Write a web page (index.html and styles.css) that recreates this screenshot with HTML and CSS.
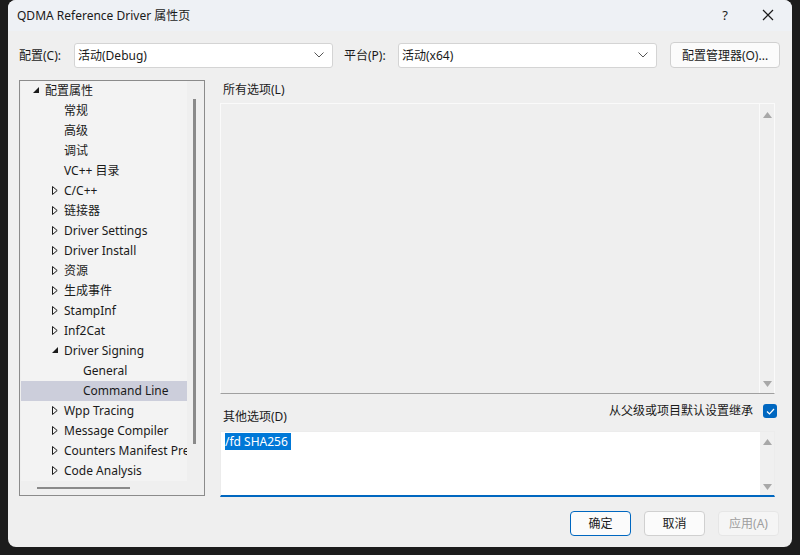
FILE: index.html
```html
<!DOCTYPE html>
<html lang="zh-CN">
<head>
    <meta charset="UTF-8">
    <title>QDMA Reference Driver 属性页</title>
    <link rel="stylesheet" href="styles.css">
</head>
<body>
    <div class="dialog">
        <div class="titlebar">
            <span class="title">QDMA Reference Driver 属性页</span>
            <span class="help">?</span>
            <svg class="close" width="12" height="12" viewBox="0 0 12 12"><path d="M1 1L11 11M11 1L1 11" stroke="#1a1a1a" stroke-width="1.2" fill="none"/></svg>
        </div>

        <div class="config-row">
            <span class="field-label">配置(C):</span>
            <div class="combo">
                <span>活动(Debug)</span>
                <svg width="10" height="6" viewBox="0 0 10 6"><path d="M0.5 0.5L5 5L9.5 0.5" stroke="#555" fill="none"/></svg>
            </div>
            <span class="field-label platform">平台(P):</span>
            <div class="combo">
                <span>活动(x64)</span>
                <svg width="10" height="6" viewBox="0 0 10 6"><path d="M0.5 0.5L5 5L9.5 0.5" stroke="#555" fill="none"/></svg>
            </div>
            <button class="btn manager">配置管理器(O)...</button>
        </div>

        <div class="main">
            <div class="tree">
                <div class="tree-list">
                    <div class="row lv0"><svg class="arrow" width="6" height="6" viewBox="0 0 6 6"><polygon points="6,0 6,6 0,6" fill="#1a1a1a"/></svg><span>配置属性</span></div>
                    <div class="row lv1"><span class="no-arrow"></span><span>常规</span></div>
                    <div class="row lv1"><span class="no-arrow"></span><span>高级</span></div>
                    <div class="row lv1"><span class="no-arrow"></span><span>调试</span></div>
                    <div class="row lv1"><span class="no-arrow"></span><span>VC++ 目录</span></div>
                    <div class="row lv1"><svg class="arrow" width="6" height="9" viewBox="0 0 6 9"><polygon points="0.5,0.5 5.2,4.5 0.5,8.5" fill="none" stroke="#1a1a1a"/></svg><span>C/C++</span></div>
                    <div class="row lv1"><svg class="arrow" width="6" height="9" viewBox="0 0 6 9"><polygon points="0.5,0.5 5.2,4.5 0.5,8.5" fill="none" stroke="#1a1a1a"/></svg><span>链接器</span></div>
                    <div class="row lv1"><svg class="arrow" width="6" height="9" viewBox="0 0 6 9"><polygon points="0.5,0.5 5.2,4.5 0.5,8.5" fill="none" stroke="#1a1a1a"/></svg><span>Driver Settings</span></div>
                    <div class="row lv1"><svg class="arrow" width="6" height="9" viewBox="0 0 6 9"><polygon points="0.5,0.5 5.2,4.5 0.5,8.5" fill="none" stroke="#1a1a1a"/></svg><span>Driver Install</span></div>
                    <div class="row lv1"><svg class="arrow" width="6" height="9" viewBox="0 0 6 9"><polygon points="0.5,0.5 5.2,4.5 0.5,8.5" fill="none" stroke="#1a1a1a"/></svg><span>资源</span></div>
                    <div class="row lv1"><svg class="arrow" width="6" height="9" viewBox="0 0 6 9"><polygon points="0.5,0.5 5.2,4.5 0.5,8.5" fill="none" stroke="#1a1a1a"/></svg><span>生成事件</span></div>
                    <div class="row lv1"><svg class="arrow" width="6" height="9" viewBox="0 0 6 9"><polygon points="0.5,0.5 5.2,4.5 0.5,8.5" fill="none" stroke="#1a1a1a"/></svg><span>StampInf</span></div>
                    <div class="row lv1"><svg class="arrow" width="6" height="9" viewBox="0 0 6 9"><polygon points="0.5,0.5 5.2,4.5 0.5,8.5" fill="none" stroke="#1a1a1a"/></svg><span>Inf2Cat</span></div>
                    <div class="row lv1"><svg class="arrow" width="6" height="6" viewBox="0 0 6 6"><polygon points="6,0 6,6 0,6" fill="#1a1a1a"/></svg><span>Driver Signing</span></div>
                    <div class="row lv2"><span class="no-arrow"></span><span>General</span></div>
                    <div class="row lv2 selected"><span class="no-arrow"></span><span>Command Line</span></div>
                    <div class="row lv1"><svg class="arrow" width="6" height="9" viewBox="0 0 6 9"><polygon points="0.5,0.5 5.2,4.5 0.5,8.5" fill="none" stroke="#1a1a1a"/></svg><span>Wpp Tracing</span></div>
                    <div class="row lv1"><svg class="arrow" width="6" height="9" viewBox="0 0 6 9"><polygon points="0.5,0.5 5.2,4.5 0.5,8.5" fill="none" stroke="#1a1a1a"/></svg><span>Message Compiler</span></div>
                    <div class="row lv1"><svg class="arrow" width="6" height="9" viewBox="0 0 6 9"><polygon points="0.5,0.5 5.2,4.5 0.5,8.5" fill="none" stroke="#1a1a1a"/></svg><span>Counters Manifest Preprocessor</span></div>
                    <div class="row lv1"><svg class="arrow" width="6" height="9" viewBox="0 0 6 9"><polygon points="0.5,0.5 5.2,4.5 0.5,8.5" fill="none" stroke="#1a1a1a"/></svg><span>Code Analysis</span></div>
                </div>
                <div class="vscroll"><div class="vthumb"></div></div>
                <div class="hscroll"><div class="hthumb"></div></div>
                <div class="corner"></div>
            </div>

            <div class="panel">
                <div class="panel-label">所有选项(L)</div>
                <div class="options-box">
                    <div class="options-pane"></div>
                    <div class="scroll-strip">
                        <svg width="9" height="6" viewBox="0 0 9 6"><polygon points="4.5,0 9,6 0,6" fill="#a8a8a8"/></svg>
                        <svg width="9" height="6" viewBox="0 0 9 6"><polygon points="0,0 9,0 4.5,6" fill="#a8a8a8"/></svg>
                    </div>
                </div>
                <div class="extra-row">
                    <span class="extra-label">其他选项(D)</span>
                    <label class="inherit">
                        <span>从父级或项目默认设置继承</span>
                        <span class="checkbox"><svg width="9" height="7" viewBox="0 0 9 7"><path d="M1 3.5L3.5 6L8 1" stroke="#fff" stroke-width="1.2" fill="none"/></svg></span>
                    </label>
                </div>
                <div class="edit-box">
                    <div class="edit-text"><span class="sel">/fd SHA256</span></div>
                    <div class="scroll-strip light">
                        <svg width="9" height="6" viewBox="0 0 9 6"><polygon points="4.5,0 9,6 0,6" fill="#a8a8a8"/></svg>
                        <svg width="9" height="6" viewBox="0 0 9 6"><polygon points="0,0 9,0 4.5,6" fill="#a8a8a8"/></svg>
                    </div>
                </div>
            </div>
        </div>

        <div class="footer">
            <button class="btn default">确定</button>
            <button class="btn">取消</button>
            <button class="btn disabled">应用(A)</button>
        </div>
    </div>
</body>
</html>
```

FILE: styles.css
```css
body {
    margin: 0;
    background: #1c1c1c;
    font-family: "Noto Sans", "Noto Sans CJK SC", sans-serif;
    font-size: 12px;
    color: #1a1a1a;
}
.dialog {
    margin-left: 8px;
    width: 784px;
    height: 547px;
    background: #efefef;
    border-radius: 8px;
    overflow: hidden;
    display: flex;
    flex-direction: column;
}
.titlebar {
    height: 31px;
    background: #eef1f5;
    display: flex;
    align-items: center;
    padding: 0 18px 1px 9px;
    box-sizing: border-box;
    flex-shrink: 0;
}
.title {
    flex: 1;
    font-size: 12px;
}
.help {
    font-size: 13px;
    margin-right: 34px;
}
.config-row {
    display: flex;
    align-items: center;
    height: 26px;
    margin-top: 11px;
    padding-left: 11px;
}
.field-label {
    width: 55px;
}
.field-label.platform {
    width: 54px;
    margin-left: 11px;
}
.combo {
    width: 259px;
    height: 25px;
    box-sizing: border-box;
    background: #fff;
    border: 1px solid #d4d4d4;
    border-radius: 3px;
    display: flex;
    align-items: center;
    justify-content: space-between;
    padding: 0 8px 1px 3px;
}
.btn {
    font-family: inherit;
    font-size: 12px;
    color: #1a1a1a;
    width: 61px;
    height: 25px;
    background: #fbfbfb;
    border: 1px solid #d0d0d0;
    border-radius: 4px;
    padding: 0 0 1px;
}
.btn.manager {
    width: 110px;
    height: 26px;
    margin-left: 13px;
}
.btn.default {
    border-color: #0067c0;
}
.btn.disabled {
    background: #f5f5f5;
    border-color: #e6e6e6;
    color: #9e9e9e;
}
.main {
    display: flex;
    gap: 15px;
    margin-top: 12px;
    padding-left: 11px;
}
.tree {
    width: 186px;
    height: 416px;
    box-sizing: border-box;
    border: 1px solid #8b8b8b;
    display: grid;
    grid-template-columns: 1fr 17px;
    grid-template-rows: 1fr 14px;
}
.tree-list {
    background: #f3f3f3;
    margin-left: 1px;
    overflow: hidden;
}
.row {
    height: 20px;
    box-sizing: border-box;
    padding-bottom: 2px;
    display: flex;
    align-items: center;
    white-space: nowrap;
}
.row.lv0 { padding-left: 12px; }
.row.lv1 { padding-left: 31px; }
.row.lv2 { padding-left: 50px; }
.row.selected {
    background: #cccedb;
}
.no-arrow {
    width: 12px;
    flex-shrink: 0;
}
.arrow {
    width: 6px;
    margin-right: 6px;
    flex-shrink: 0;
}
.vscroll {
    position: relative;
}
.vthumb {
    position: absolute;
    left: 6px;
    top: 18px;
    width: 3px;
    height: 345px;
    background: #8a8a8a;
}
.hscroll {
    position: relative;
}
.hthumb {
    position: absolute;
    left: 17px;
    top: 6px;
    width: 93px;
    height: 2px;
    background: #8a8a8a;
}
.panel {
    width: 555px;
    display: flex;
    flex-direction: column;
}
.panel-label {
    height: 23px;
    line-height: 19px;
    padding-left: 3px;
}
.options-box {
    height: 291px;
    box-sizing: border-box;
    border: 1px solid #fafafa;
    border-bottom-color: #a0a0a0;
    display: flex;
}
.options-pane {
    flex: 1;
}
.scroll-strip {
    width: 14px;
    border-left: 1px solid #fafafa;
    display: flex;
    flex-direction: column;
    justify-content: space-between;
    align-items: center;
    padding: 8px 0 6px;
}
.scroll-strip.light {
    background: #f0f0f0;
    border-left: none;
    padding: 7px 0 5px;
}
.extra-row {
    height: 37px;
    display: flex;
    justify-content: space-between;
    padding-top: 10px;
    box-sizing: border-box;
}
.extra-label {
    align-self: flex-end;
    line-height: 20px;
    margin-bottom: 4px;
    padding-left: 3px;
}
.inherit {
    display: flex;
    align-items: flex-start;
    gap: 10px;
    margin-right: -2px;
}
.inherit span:first-child {
    line-height: 13px;
}
.checkbox {
    width: 14px;
    height: 14px;
    background: #0067c0;
    border-radius: 3px;
    display: flex;
    align-items: center;
    justify-content: center;
}
.edit-box {
    height: 66px;
    box-sizing: border-box;
    background: #fff;
    border: 1px solid #ececec;
    border-bottom: 2px solid #0067c0;
    display: flex;
}
.edit-text {
    flex: 1;
    padding: 2px 0 0 4px;
    line-height: 16px;
}
.sel {
    background: #0078d7;
    color: #fff;
    padding-right: 3px;
}
.footer {
    display: flex;
    justify-content: flex-end;
    gap: 13px;
    margin-top: 14px;
    padding-right: 13px;
}
```
